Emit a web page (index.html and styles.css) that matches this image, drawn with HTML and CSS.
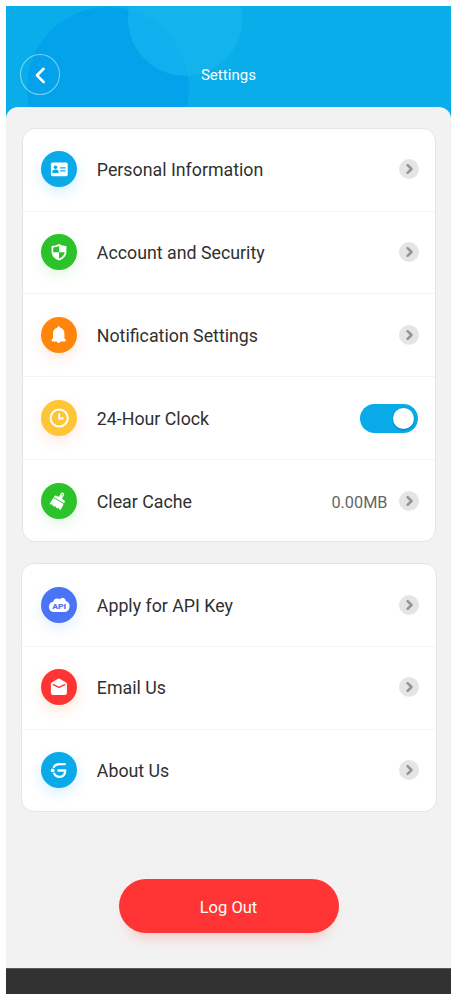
FILE: index.html
```html
<!DOCTYPE html>
<html lang="en">
<head>
<meta charset="utf-8">
<title>Settings</title>
<link rel="stylesheet" href="styles.css">
</head>
<body>
<svg class="defs" width="0" height="0" aria-hidden="true">
  <symbol id="go" viewBox="0 0 20 20"><circle cx="10" cy="10" r="10" fill="#e5e5e5"/><path d="M8.600 6.100 12.500 10 8.600 13.900" fill="none" stroke="#949494" stroke-width="2.500" stroke-linecap="round" stroke-linejoin="round"/></symbol>
</svg>
<div class="phone">
  <header class="header">
    <svg class="bubbles" viewBox="0 0 445 120" aria-hidden="true"><circle cx="102" cy="82" r="81" fill="#03a2eb"/><circle cx="179.2" cy="12.5" r="57.3" fill="#1bb9ef" fill-opacity=".55"/></svg>
    <button class="back" aria-label="Back"><svg viewBox="0 0 38 38"><path d="M22.600 12.800 16 19.300l6.600 6.700" fill="none" stroke="#fff" stroke-width="2.600" stroke-linecap="round" stroke-linejoin="round"/></svg></button>
    <h1 class="title">Settings</h1>
  </header>
  <main class="sheet">
    <section class="card general">
      <div class="row">
        <svg class="icon blue" viewBox="0 0 36 36"><rect x="9.900" y="11.600" width="16.800" height="13.600" rx="1.600" fill="#fff"/><circle cx="14.500" cy="16.300" r="1.800"/><path d="M11.400 22v-1.200q0-2.200 3.100-2.200t3.100 2.200V22zM19.200 16.300h5.300v1.300h-5.300zM19.200 19.300h5.300v1.300h-5.300z"/></svg>
        <span class="label">Personal Information</span><svg class="go"><use href="#go"/></svg>
      </div>
      <div class="row">
        <svg class="icon green" viewBox="0 0 36 36"><path d="M18 10.100q3.400 2 7.400 1.900v6q0 5.500-7.400 8.600-7.400-3.100-7.400-8.600v-6q4 .1 7.400-1.900z" fill="#fff"/><path d="M12.200 13.400q3.200-.1 5.800-1.400v6.200h-5.800zM18 18.200h5.700q-.4 3.900-5.700 6.500z"/></svg>
        <span class="label">Account and Security</span><svg class="go"><use href="#go"/></svg>
      </div>
      <div class="row">
        <svg class="icon orange" viewBox="0 0 36 36"><path d="M16.200 10.800a1.500 1.500 0 0 1 3 0q4.200 1.200 4.200 5.600v5l1.200 1.200q.8 2-.8 2h-4.300a1.900 1.900 0 0 1-3.600 0h-4.300q-1.600 0-.8-2l1.200-1.200v-5q0-4.400 4.200-5.600z" fill="#fff"/></svg>
        <span class="label">Notification Settings</span><svg class="go"><use href="#go"/></svg>
      </div>
      <div class="row">
        <svg class="icon yellow" viewBox="0 0 36 36"><g fill="none" stroke="#fff" stroke-width="2"><circle cx="18.200" cy="18" r="8.600"/><path d="M18.200 13.400v5h4.300"/></g></svg>
        <span class="label">24-Hour Clock</span><span class="switch" role="switch" aria-checked="true"></span>
      </div>
      <div class="row">
        <svg class="icon green" viewBox="0 0 36 36"><g transform="translate(17.500 18) rotate(30) scale(.95)" fill="#fff"><path d="M-6.300-1.500q0-2.300 2.300-2.300h2.100v-4.300a1.900 1.900 0 0 1 3.800 0v4.300H4q2.300 0 2.300 2.300v.6H-6.300zM-6.300-.1H6.300l.4 7.300H4.600L3.800 5.800 3.400 7.200H.6L0 5.800-.6 7.200h-2.800l-.4-1.400-.8 1.400h-2.100z"/><circle cx="0" cy="-7.800" r=".7" fill="#2bc22a"/></g></svg>
        <span class="label">Clear Cache</span><span class="value">0.00MB</span><svg class="go"><use href="#go"/></svg>
      </div>
    </section>
    <section class="card wide">
      <div class="row">
        <svg class="icon indigo" viewBox="0 0 36 36"><path d="M12.500 24.900a5.100 5.100 0 0 1-.3-10.100q.8-3.200 4.300-3.200 1.300 0 2.300.7 1.300-2 3.500-1.400 2.300.5 2.500 3 4 1.200 3.800 5.500-.3 4.800-4.800 5.500z" fill="#fff"/><text class="api" x="18.200" y="22" text-anchor="middle" textLength="14" lengthAdjust="spacingAndGlyphs">API</text></svg>
        <span class="label">Apply for API Key</span><svg class="go"><use href="#go"/></svg>
      </div>
      <div class="row">
        <svg class="icon red" viewBox="0 0 36 36"><path d="M9.900 15q0-1 .9-1.500l6.200-3.800q.9-.5 1.800 0l6.200 3.800q.9.500.9 1.500v8.800q0 2.200-2.200 2.200H12.100q-2.200 0-2.200-2.200z" fill="#fff"/><path class="line" d="M12.400 15.600 17.900 18.400l5.900-2.800" fill="none" stroke-width="1.300" stroke-linecap="round" stroke-linejoin="round"/></svg>
        <span class="label">Email Us</span><svg class="go"><use href="#go"/></svg>
      </div>
      <div class="row">
        <svg class="icon blue" viewBox="0 0 36 36"><g fill="none" stroke="#fff" stroke-width="2.300" stroke-linecap="round" stroke-linejoin="round"><path d="M23.800 12.200H18.600q-3.900 0-5.700 2.700M13.200 21.700q1.700 3.100 5.400 3.100 5.300 0 5.700-6.300H17.300"/></g><circle cx="11.700" cy="18.400" r="1.900" fill="#fff"/></svg>
        <span class="label">About Us</span><svg class="go"><use href="#go"/></svg>
      </div>
    </section>
    <button class="logout">Log Out</button>
  </main>
  <div class="navbar"></div>
</div>
</body>
</html>
```
FILE: styles.css
```css
* { box-sizing: border-box; }
body { margin: 0; padding: 6px; height: 1000px; background: #fff; font-family: Roboto, sans-serif; overflow: hidden; }
.defs { position: absolute; }
.phone { width: 445px; height: 988px; display: flex; flex-direction: column; background: #09adea; overflow: hidden; }
.header { position: relative; height: 101px; flex: none; display: grid; grid-template-columns: 54px 1fr 54px; padding: 48px 0 0; align-items: start; }
.bubbles { position: absolute; top: 0; left: 0; width: 445px; height: 120px; }
.back { position: relative; width: 40px; height: 41px; margin-left: 14px; padding: 0; border: 1px solid rgba(255,255,255,.5); border-radius: 50%; background: none; }
.back svg { display: block; width: 38px; height: 38px; }
.title { position: relative; margin: 0; color: #fff; font-size: 15px; font-weight: 400; line-height: 43px; text-align: center; letter-spacing: .05px; }
.sheet { position: relative; height: 861px; flex: none; display: flex; flex-direction: column; align-items: center; padding-top: 21px; background: #f2f2f2; border-radius: 12px 12px 0 0; }
.card { width: 414px; height: 414px; display: grid; background: #fff; border: 1px solid #e5e5e5; border-radius: 13px; }
.card.general { grid-template-rows: 82px 82px 83px 83px 82px; }
.card.wide { width: 416px; height: 249px; margin-top: 21px; grid-template-rows: repeat(3, 1fr); }
.row { min-height: 0; display: flex; align-items: center; padding: 0 16px 0 18px; }
.general .row:nth-child(1) { padding-bottom: 2px; }
.general .row:nth-child(2) { padding-bottom: 1px; }
.general .row:nth-child(5) { padding-top: 1px; }
.row + .row { border-top: 1px solid #f4f4f4; }
.wide .row { padding: 0 17px 1px 19px; }
.icon { width: 36px; height: 36px; flex: none; border-radius: 50%; margin-right: 20px; }
.blue { background: #0aaae8; fill: #0aaae8; box-shadow: 0 5px 14px rgba(10,170,255,.18); }
.green { background: #2bc22a; fill: #2bc22a; box-shadow: 0 5px 14px rgba(43,194,42,.13); }
.orange { background: #ff860b; box-shadow: 0 5px 14px rgba(255,110,40,.15); }
.yellow { background: #fec536; box-shadow: 0 5px 14px rgba(255,120,50,.16); }
.indigo { background: #4b73f5; fill: #4b73f5; box-shadow: 0 5px 14px rgba(50,150,255,.15); }
.red { background: #ff3534; box-shadow: 0 5px 14px rgba(255,110,40,.18); }
.line { stroke: #ff3534; }
.api { font: 900 8px Roboto, sans-serif; }
.label { flex: 1; color: #303030; font-size: 17.800px; line-height: 24px; padding: 2px 0 0 .3px; }
.value { color: #666; font-size: 16.300px; margin-right: 11px; padding-top: 2px; }
.go { width: 20px; height: 20px; flex: none; overflow: visible; }
.switch { width: 58px; height: 29px; margin-right: 1px; padding: 4px; border-radius: 15px; background: #09aae8; display: flex; justify-content: flex-end; }
.switch::after { content: ""; width: 21px; height: 21px; border-radius: 50%; background: #fff; box-shadow: 0 1px 2px rgba(0,0,0,.3); }
.logout { width: 220px; height: 54px; margin-top: 67px; padding: 2px 0 0; border: 0; border-radius: 27px; background: #ff3535; color: #fff; font: 400 16.500px Roboto, sans-serif; box-shadow: 0 14px 12px -10px rgba(255,90,80,.25), 0 6px 18px rgba(255,180,150,.08); }
.navbar { flex: 1; background: #323232; border-top: 1px solid #5a5a5a; }
```
